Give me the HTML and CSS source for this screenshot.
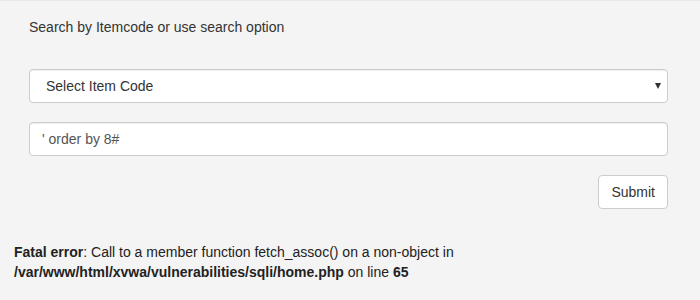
FILE: index.html
```html
<!DOCTYPE html>
<html>
<head>
<meta charset="utf-8">
<link rel="stylesheet" href="styles.css">
</head>
<body>
<div class="page">
  <form class="search-form">
    <p class="intro">Search by Itemcode or use search option</p>
    <div class="select-wrap">
      <select class="form-control select">
        <option>Select Item Code</option>
      </select>
      <span class="caret"></span>
    </div>
    <input class="form-control input" type="text" value="' order by 8#">
    <div class="actions">
      <button type="button" class="btn">Submit</button>
    </div>
  </form>
  <div class="error">
    <b>Fatal error</b>: Call to a member function fetch_assoc() on a non-object in<br>
    <b>/var/www/html/xvwa/vulnerabilities/sqli/home.php</b> on line <b>65</b>
  </div>
</div>
</body>
</html>
```
FILE: styles.css
```css
html, body {
  margin: 0;
  padding: 0;
  background: #f4f4f4;
}
body {
  font-family: "Liberation Sans", Arial, sans-serif;
  font-size: 14px;
  line-height: 20px;
  color: #333;
  border-top: 1px solid #e9e9e9;
}
.page {
  padding: 0 14px;
}
.search-form {
  padding: 16px 18px 0 15px;
  display: flex;
  flex-direction: column;
}
.intro {
  margin: 0 0 32px 0;
}
.select-wrap {
  position: relative;
  margin-bottom: 19px;
}
.form-control {
  display: block;
  box-sizing: border-box;
  width: 100%;
  height: 34px;
  border: 1px solid #ccc;
  border-radius: 4px;
  background: #fff;
  font-family: "Liberation Sans", Arial, sans-serif;
  font-size: 14px;
  color: #555;
  margin: 0;
  box-shadow: inset 0 1px 1px rgba(0,0,0,0.075);
}
.select {
  -webkit-appearance: none;
  appearance: none;
  padding: 6px 12px 6px 16px;
  color: #333;
}
.caret {
  position: absolute;
  right: 7px;
  top: 14px;
  width: 0;
  height: 0;
  border-left: 3px solid transparent;
  border-right: 3px solid transparent;
  border-top: 6px solid #333;
}
.input {
  padding: 6px 12px;
  margin-bottom: 19px;
}
.actions {
  display: flex;
  justify-content: flex-end;
}
.btn {
  height: 34px;
  padding: 6px 12px;
  border: 1px solid #ccc;
  border-radius: 4px;
  background: #fff;
  color: #333;
  font-family: "Liberation Sans", Arial, sans-serif;
  font-size: 14px;
  line-height: 20px;
}
.error {
  margin-top: 33px;
  color: #222;
}
```
